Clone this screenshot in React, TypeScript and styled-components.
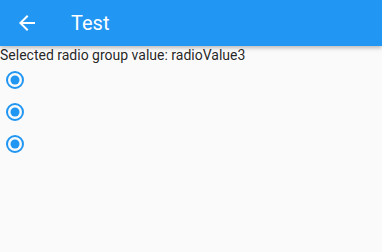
import React, { useState } from 'react';
import styled, { createGlobalStyle } from 'styled-components';

const GlobalStyle = createGlobalStyle`
  html, body {
    margin: 0;
    padding: 0;
    background: #fafafa;
  }
  body {
    font-family: Roboto, "Noto Sans", sans-serif;
  }
`;

const values = ['radioValue1', 'radioValue2', 'radioValue3'];

const App = () => {
  const [selected] = useState('radioValue3');
  return (
    <Page>
      <GlobalStyle />
      <AppBar>
        <BackButton aria-label="Back">
          <svg width="24" height="24" viewBox="0 0 24 24">
            <path
              fill="#fff"
              d="M20 11H7.83l5.59-5.59L12 4l-8 8 8 8 1.41-1.41L7.83 13H20v-2z"
            />
          </svg>
        </BackButton>
        <Title>Test</Title>
      </AppBar>
      <Body>
        <Label>Selected radio group value: {selected}</Label>
        {values.map((v) => (
          <RadioRow key={v}>
            <svg width="20" height="20" viewBox="0 0 20 20">
              <circle cx="10" cy="10" r="8" fill="none" stroke="#2196f3" strokeWidth="2" />
              <circle cx="10" cy="10" r="4.5" fill="#2196f3" />
            </svg>
          </RadioRow>
        ))}
      </Body>
    </Page>
  );
};

const Page = styled.div`
  width: 382px;
  height: 252px;
  background: #fafafa;
  overflow: hidden;
`;
const AppBar = styled.header`
  height: 46px;
  background: #2196f3;
  display: flex;
  align-items: center;
  box-shadow: 0 2px 4px rgba(0, 0, 0, 0.25);
  position: relative;
`;
const BackButton = styled.div`
  width: 56px;
  height: 46px;
  display: flex;
  align-items: center;
  justify-content: center;
  margin-left: -1px;
`;
const Title = styled.h1`
  margin: 0 0 0 16px;
  color: #fff;
  font-size: 20px;
  font-weight: 400;
  font-family: Roboto, sans-serif;
`;
const Body = styled.div`
  display: flex;
  flex-direction: column;
`;
const Label = styled.div`
  font-size: 14px;
  line-height: 18px;
  color: rgba(0, 0, 0, 0.87);
`;
const RadioRow = styled.div`
  width: 30px;
  height: 32px;
  display: flex;
  align-items: center;
  justify-content: center;
`;

export default App;
